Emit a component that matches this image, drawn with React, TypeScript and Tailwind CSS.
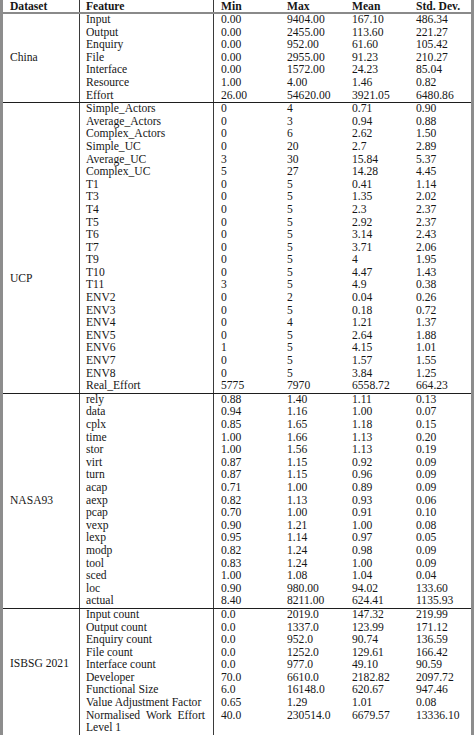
type Row = [string, string, string, string, string];

type Section = {
  name: string;
  labelClass: string;
  rows: Row[];
  last?: boolean;
};

const sections: Section[] = [
  {
    name: 'China',
    labelClass: '',
    rows: [
      ['Input', '0.00', '9404.00', '167.10', '486.34'],
      ['Output', '0.00', '2455.00', '113.60', '221.27'],
      ['Enquiry', '0.00', '952.00', '61.60', '105.42'],
      ['File', '0.00', '2955.00', '91.23', '210.27'],
      ['Interface', '0.00', '1572.00', '24.23', '85.04'],
      ['Resource', '1.00', '4.00', '1.46', '0.82'],
      ['Effort', '26.00', '54620.00', '3921.05', '6480.86'],
    ],
  },
  {
    name: 'UCP',
    labelClass: 'pt-[62px]',
    rows: [
      ['Simple_Actors', '0', '4', '0.71', '0.90'],
      ['Average_Actors', '0', '3', '0.94', '0.88'],
      ['Complex_Actors', '0', '6', '2.62', '1.50'],
      ['Simple_UC', '0', '20', '2.7', '2.89'],
      ['Average_UC', '3', '30', '15.84', '5.37'],
      ['Complex_UC', '5', '27', '14.28', '4.45'],
      ['T1', '0', '5', '0.41', '1.14'],
      ['T3', '0', '5', '1.35', '2.02'],
      ['T4', '0', '5', '2.3', '2.37'],
      ['T5', '0', '5', '2.92', '2.37'],
      ['T6', '0', '5', '3.14', '2.43'],
      ['T7', '0', '5', '3.71', '2.06'],
      ['T9', '0', '5', '4', '1.95'],
      ['T10', '0', '5', '4.47', '1.43'],
      ['T11', '3', '5', '4.9', '0.38'],
      ['ENV2', '0', '2', '0.04', '0.26'],
      ['ENV3', '0', '5', '0.18', '0.72'],
      ['ENV4', '0', '4', '1.21', '1.37'],
      ['ENV5', '0', '5', '2.64', '1.88'],
      ['ENV6', '1', '5', '4.15', '1.01'],
      ['ENV7', '0', '5', '1.57', '1.55'],
      ['ENV8', '0', '5', '3.84', '1.25'],
      ['Real_Effort', '5775', '7970', '6558.72', '664.23'],
    ],
  },
  {
    name: 'NASA93',
    labelClass: '',
    rows: [
      ['rely', '0.88', '1.40', '1.11', '0.13'],
      ['data', '0.94', '1.16', '1.00', '0.07'],
      ['cplx', '0.85', '1.65', '1.18', '0.15'],
      ['time', '1.00', '1.66', '1.13', '0.20'],
      ['stor', '1.00', '1.56', '1.13', '0.19'],
      ['virt', '0.87', '1.15', '0.92', '0.09'],
      ['turn', '0.87', '1.15', '0.96', '0.09'],
      ['acap', '0.71', '1.00', '0.89', '0.09'],
      ['aexp', '0.82', '1.13', '0.93', '0.06'],
      ['pcap', '0.70', '1.00', '0.91', '0.10'],
      ['vexp', '0.90', '1.21', '1.00', '0.08'],
      ['lexp', '0.95', '1.14', '0.97', '0.05'],
      ['modp', '0.82', '1.24', '0.98', '0.09'],
      ['tool', '0.83', '1.24', '1.00', '0.09'],
      ['sced', '1.00', '1.08', '1.04', '0.04'],
      ['loc', '0.90', '980.00', '94.02', '133.60'],
      ['actual', '8.40', '8211.00', '624.41', '1135.93'],
    ],
  },
  {
    name: 'ISBSG 2021',
    labelClass: 'pb-[16px]',
    last: true,
    rows: [
      ['Input count', '0.0', '2019.0', '147.32', '219.99'],
      ['Output count', '0.0', '1337.0', '123.99', '171.12'],
      ['Enquiry count', '0.0', '952.0', '90.74', '136.59'],
      ['File count', '0.0', '1252.0', '129.61', '166.42'],
      ['Interface count', '0.0', '977.0', '49.10', '90.59'],
      ['Developer', '70.0', '6610.0', '2182.82', '2097.72'],
      ['Functional Size', '6.0', '16148.0', '620.67', '947.46'],
      ['Value Adjustment Factor', '0.65', '1.29', '1.01', '0.08'],
      ['Normalised Work Effort Level 1', '40.0', '230514.0', '6679.57', '13336.10'],
    ],
  },
];

const DataRow = ({ row }: { row: Row }) => (
  <div className="flex">
    <div className="w-[134px] shrink-0 border-r border-[#3a3a3a] pl-[6px] pr-[8px] text-justify">
      {row[0]}
    </div>
    <div className="w-[66px] shrink-0 pl-[7px]">{row[1]}</div>
    <div className="w-[65px] shrink-0 pl-[7px]">{row[2]}</div>
    <div className="w-[64px] shrink-0 pl-[7px]">{row[3]}</div>
    <div className="flex-1 pl-[7px]">{row[4]}</div>
  </div>
);

const App = () => {
  return (
    <div className="w-[474px] h-[735px] overflow-hidden bg-white border-x-[3px] border-[#8d8d8d] font-['Liberation_Serif',serif] text-[11.6px] leading-[12.6px] text-[#161616]">
      <div className="flex h-[14px] border-b-2 border-[#8a8a8a] font-bold">
        <div className="w-[77px] shrink-0 border-r border-[#3a3a3a] pl-[7px] pt-[1px]">Dataset</div>
        <div className="w-[134px] shrink-0 border-r border-[#3a3a3a] pl-[6px] pt-[1px]">Feature</div>
        <div className="w-[66px] shrink-0 pl-[7px] pt-[1px]">Min</div>
        <div className="w-[65px] shrink-0 pl-[7px] pt-[1px]">Max</div>
        <div className="w-[64px] shrink-0 pl-[7px] pt-[1px]">Mean</div>
        <div className="flex-1 pl-[7px] pt-[1px]">Std. Dev.</div>
      </div>
      {sections.map((s) => (
        <div
          key={s.name}
          className={s.last ? 'flex' : 'flex border-b border-[#1e1e1e]'}
        >
          <div
            className={`w-[77px] shrink-0 border-r border-[#3a3a3a] pl-[7px] flex items-center ${s.labelClass}`}
          >
            {s.name}
          </div>
          <div className="flex-1">
            {s.rows.map((r) => (
              <DataRow key={r[0]} row={r} />
            ))}
          </div>
        </div>
      ))}
    </div>
  );
};

export default App;
